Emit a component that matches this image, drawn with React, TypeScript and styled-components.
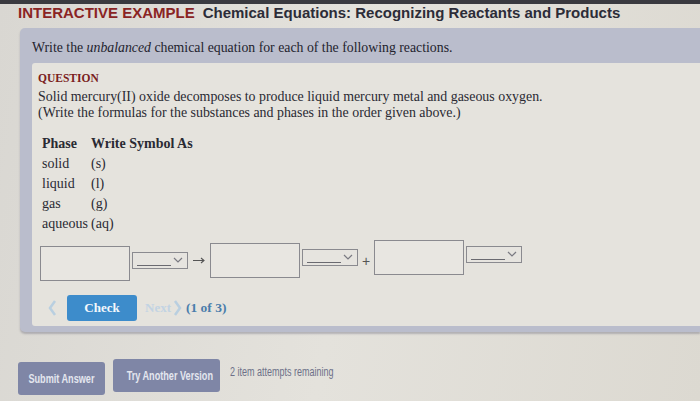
import styled, { createGlobalStyle } from "styled-components";

const GlobalStyle = createGlobalStyle`
  html, body {
    margin: 0;
    padding: 0;
    background: #dedbd4;
    overflow: hidden;
  }
  body {
    width: 700px;
    height: 401px;
  }
`;

const Page = styled.div`
  width: 700px;
  height: 401px;
  border-top: 4px solid #3a3a40;
  box-sizing: border-box;
  background: linear-gradient(100deg, #d9d7d2 0%, #e4e2dc 50%, #dcd9d1 100%);
  font-family: "Liberation Serif", serif;
  color: #2a2a33;
`;

const Title = styled.h1`
  margin: 0;
  padding: 0 0 0 18px;
  font-family: "Liberation Sans", Arial, sans-serif;
  font-size: 15px;
  font-weight: bold;
  letter-spacing: 0;
  line-height: 18px;
  color: #2c2c38;
`;

const Tag = styled.span`
  color: #8a2424;
  margin-right: 8px;
`;

const OuterPanel = styled.div`
  margin: 6px 0 0 20px;
  padding: 12px 0 6px 12px;
  background: #babdcc;
  border-radius: 5px 0 0 5px;
  box-shadow: 0 2px 2px rgba(90, 90, 110, 0.35);
`;

const Intro = styled.p`
  margin: 0 0 7px 0;
  font-size: 13.8px;
  line-height: 16px;
  color: #23232e;
`;

const InnerPanel = styled.div`
  background: #e5e3dd;
  padding: 8px 0 5px 6px;
  border-radius: 3px 0 0 3px;
`;

const QuestionLabel = styled.div`
  font-size: 11.5px;
  font-weight: bold;
  color: #7a2020;
  line-height: 14px;
`;

const QuestionText = styled.p`
  margin: 4px 0 0 0;
  font-size: 13.9px;
  line-height: 16px;
  color: #2a2a33;
`;

const PhaseTable = styled.div`
  margin: 13px 0 0 4px;
  display: grid;
  grid-template-columns: 49px auto;
  grid-auto-rows: 20px;
  font-size: 14px;
  line-height: 20px;
  justify-content: start;
`;

const Cell = styled.span<{ head?: boolean }>`
  font-weight: ${({ head }) => (head ? "bold" : "normal")};
  white-space: nowrap;
`;

const EquationRow = styled.div`
  margin: 9px 0 0 2px;
  display: flex;
  align-items: center;
`;

const Slot = styled.div<{ shift: number }>`
  display: flex;
  align-items: flex-start;
  transform: translateY(${({ shift }) => shift}px);
`;

const FormulaBox = styled.div`
  width: 88px;
  height: 33px;
  border: 1px solid #8a8a8f;
  background: #e8e6e1;
`;

const PhaseSelect = styled.div`
  margin: 6px 0 0 2px;
  width: 56px;
  height: 17px;
  border: 1px solid #8a8a8f;
  box-sizing: border-box;
  position: relative;
  background: #e6e4df;
`;

const SelectLine = styled.div`
  position: absolute;
  left: 4px;
  bottom: 2px;
  width: 34px;
  border-bottom: 1.5px solid #6a6a70;
`;

const Chevron = styled.svg`
  position: absolute;
  right: 4px;
  top: 4px;
`;

const Operator = styled.span<{ gap: number }>`
  display: flex;
  align-items: center;
  margin: 0 ${({ gap }) => gap}px;
  font-family: "Liberation Sans", sans-serif;
  font-size: 14px;
  color: #555;
`;

const ControlRow = styled.div`
  margin: 17px 0 0 10px;
  display: flex;
  align-items: center;
  font-family: "Liberation Serif", serif;
`;

const CheckButton = styled.button`
  margin-left: 10px;
  width: 70px;
  height: 26px;
  border: none;
  border-radius: 3px;
  background: #3d8ccb;
  color: #f4f8fc;
  font-family: "Liberation Serif", serif;
  font-size: 13px;
  font-weight: bold;
`;

const NextText = styled.span`
  margin-left: 8px;
  font-size: 13px;
  font-weight: bold;
  color: #c2d3e3;
`;

const Counter = styled.span`
  margin-left: 4px;
  font-size: 13.5px;
  font-weight: bold;
  color: #4a7dab;
`;

const Footer = styled.div`
  margin: 30px 0 0 18px;
  display: flex;
  align-items: center;
  gap: 8px;
`;

const GrayButton = styled.button<{ lift: number; width: number }>`
  width: ${({ width }) => width}px;
  height: 33px;
  padding: 0;
  border: none;
  border-radius: 3px;
  background: #7f86a6;
  color: #e4e6ef;
  font-family: "Liberation Sans", sans-serif;
  font-size: 12px;
  font-weight: bold;
  white-space: nowrap;
  transform: translateY(${({ lift }) => -lift}px);
`;

const Narrow = styled.span`
  display: inline-block;
  transform: scaleX(0.76);
`;

const Remaining = styled.span`
  margin-left: 2px;
  font-family: "Liberation Sans", sans-serif;
  font-size: 12.5px;
  white-space: nowrap;
  color: #6c7088;
  transform: translateY(-7px) scaleX(0.72);
  transform-origin: left center;
`;

const Select = () => (
  <PhaseSelect>
    <SelectLine />
    <Chevron width="10" height="7" viewBox="0 0 10 7">
      <path d="M1 1 L5 5 L9 1" fill="none" stroke="#7a7a82" strokeWidth="1.2" />
    </Chevron>
  </PhaseSelect>
);

const phases = [
  ["solid", "(s)"],
  ["liquid", "(l)"],
  ["gas", "(g)"],
  ["aqueous", "(aq)"],
];

export default function App() {
  return (
    <Page>
      <GlobalStyle />
      <Title>
        <Tag>INTERACTIVE EXAMPLE</Tag>Chemical Equations: Recognizing Reactants and Products
      </Title>
      <OuterPanel>
        <Intro>
          Write the <i>unbalanced</i> chemical equation for each of the following reactions.
        </Intro>
        <InnerPanel>
          <QuestionLabel>QUESTION</QuestionLabel>
          <QuestionText>
            Solid mercury(II) oxide decomposes to produce liquid mercury metal and gaseous oxygen.
            <br />
            (Write the formulas for the substances and phases in the order given above.)
          </QuestionText>
          <PhaseTable>
            <Cell head>Phase</Cell>
            <Cell head>Write Symbol As</Cell>
            {phases.map(([name, sym]) => [
              <Cell key={name}>{name}</Cell>,
              <Cell key={sym}>{sym}</Cell>,
            ])}
          </PhaseTable>
          <EquationRow>
            <Slot shift={3}>
              <FormulaBox />
              <Select />
            </Slot>
            <Operator gap={5}>
              <svg width="12" height="7" viewBox="0 0 12 7">
                <path d="M0 3.5 H11 M8 1 L11 3.5 L8 6" fill="none" stroke="#555" strokeWidth="1.1" />
              </svg>
            </Operator>
            <Slot shift={0}>
              <FormulaBox />
              <Select />
            </Slot>
            <Operator gap={4}>+</Operator>
            <Slot shift={-3}>
              <FormulaBox />
              <Select />
            </Slot>
          </EquationRow>
          <ControlRow>
            <svg width="9" height="16" viewBox="0 0 9 16">
              <path d="M7 1 L2 8 L7 15" fill="none" stroke="#b9cfe0" strokeWidth="2.5" />
            </svg>
            <CheckButton>Check</CheckButton>
            <NextText>Next</NextText>
            <svg width="9" height="16" viewBox="0 0 9 16" style={{ marginLeft: 2 }}>
              <path d="M2 1 L7 8 L2 15" fill="none" stroke="#b9cfe0" strokeWidth="2.5" />
            </svg>
            <Counter>(1 of 3)</Counter>
          </ControlRow>
        </InnerPanel>
      </OuterPanel>
      <Footer>
        <GrayButton lift={0} width={87}>
          <Narrow>Submit Answer</Narrow>
        </GrayButton>
        <GrayButton lift={3} width={107}>
          <Narrow>Try Another Version</Narrow>
        </GrayButton>
        <Remaining>2 item attempts remaining</Remaining>
      </Footer>
    </Page>
  );
}
